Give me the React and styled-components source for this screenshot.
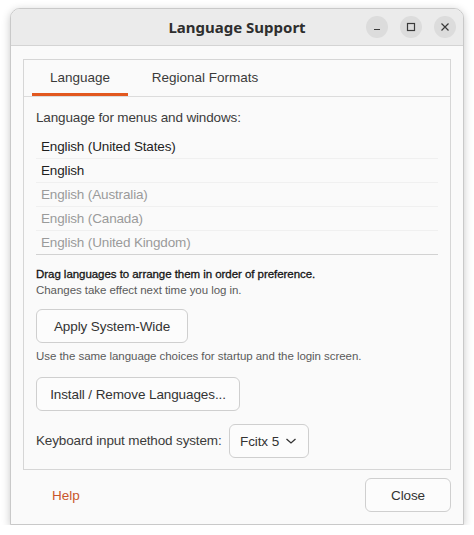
import React from 'react';
import styled, { createGlobalStyle } from 'styled-components';

const GlobalStyle = createGlobalStyle`
    html, body {
        margin: 0;
        padding: 0;
        background: #ffffff;
        font-family: "Liberation Sans", Arial, sans-serif;
        color: #303030;
    }
`;

const Window = styled.div`
    margin: 8px 0 0 10px;
    width: 454px;
    height: 517px;
    box-sizing: border-box;
    border: 1px solid #c9c9c9;
    border-radius: 10px 10px 0 0;
    background: #fafafa;
    box-shadow: 0 2px 8px rgba(0, 0, 0, 0.22);
    display: flex;
    flex-direction: column;
    overflow: hidden;
`;

const TitleBar = styled.div`
    height: 36px;
    flex: none;
    background: #ebebeb;
    border-bottom: 1px solid #d4d4d4;
    display: flex;
    align-items: center;
    justify-content: center;
    position: relative;
`;

const Title = styled.div`
    font-family: "Noto Sans", sans-serif;
    font-size: 15px;
    font-weight: 700;
    color: #2e2e2e;
`;

const Controls = styled.div`
    position: absolute;
    right: 7px;
    top: 7px;
    display: flex;
    gap: 12px;
`;

const CircleButton = styled.div`
    width: 22px;
    height: 22px;
    border-radius: 50%;
    background: #dcdcdc;
    display: flex;
    align-items: center;
    justify-content: center;
`;

const Body = styled.div`
    padding: 13px 12px 0 12px;
    display: flex;
    flex-direction: column;
    flex: 1;
`;

const Frame = styled.div`
    height: 411px;
    box-sizing: border-box;
    border: 1px solid #d6d6d6;
    background: #fafafa;
    display: flex;
    flex-direction: column;
`;

const TabBar = styled.div`
    display: flex;
    padding-left: 8px;
    height: 37px;
    box-sizing: border-box;
    border-bottom: 1px solid #dcdcdc;
`;

const Tab = styled.div`
    width: ${props => props.w};
    display: flex;
    align-items: center;
    justify-content: center;
    font-size: 13.5px;
    color: #3a3a3a;
    box-sizing: border-box;
    border-bottom: 3px solid ${props => (props.active ? '#e2581f' : 'transparent')};
    padding-top: 2px;
`;

const Content = styled.div`
    padding: 12px 12px 0 12px;
    display: flex;
    flex-direction: column;
`;

const Label = styled.div`
    font-size: 13.5px;
    letter-spacing: -0.15px;
    line-height: 18px;
    color: #3c3c3c;
    white-space: nowrap;
`;

const List = styled.div`
    border-bottom: 1px solid #d2d2d2;
    margin: 7px 0 11px 0;
`;

const Row = styled.div`
    height: 24px;
    box-sizing: border-box;
    display: flex;
    align-items: center;
    padding-left: 5px;
    font-size: 13.5px;
    letter-spacing: -0.15px;
    color: ${props => (props.dim ? '#9a9a9a' : '#1e1e1e')};
    border-top: 1px solid #f0f0f0;
    &:first-child {
        border-top: none;
    }
`;

const Note = styled.div`
    font-size: 11.5px;
    line-height: 16px;
    white-space: nowrap;
    letter-spacing: -0.05px;
    color: ${props => (props.strong ? '#141414' : '#5a5a5a')};
    -webkit-text-stroke: ${props => (props.strong ? '0.3px #141414' : '0')};
    margin: ${props => props.m || '0'};
`;

const Button = styled.div`
    box-sizing: border-box;
    height: 34px;
    padding: 0;
    border: 1px solid #cfcfcf;
    border-radius: 6px;
    background: #fcfcfc;
    display: inline-flex;
    align-items: center;
    justify-content: center;
    font-size: 13.5px;
    letter-spacing: -0.1px;
    white-space: nowrap;
    color: #333;
    align-self: flex-start;
    flex: none;
    width: ${props => props.w || 'auto'};
    margin: ${props => props.m || '0'};
`;

const KeyboardRow = styled.div`
    display: flex;
    align-items: center;
    gap: 7px;
    margin-top: 13px;
`;

const Footer = styled.div`
    display: flex;
    justify-content: space-between;
    align-items: center;
    padding-top: 8px;
`;

const HelpLink = styled.div`
    font-size: 13.5px;
    color: #c9562a;
    margin-left: 29px;
`;

const Minimize = () => (
    <svg width="10" height="10" viewBox="0 0 10 10">
        <path d="M2 7.5h6" stroke="#3a3a3a" strokeWidth="1.2" fill="none" />
    </svg>
);

const Maximize = () => (
    <svg width="10" height="10" viewBox="0 0 10 10">
        <rect x="1.5" y="1.5" width="7" height="7" stroke="#3a3a3a" strokeWidth="1.2" fill="none" />
    </svg>
);

const CloseIcon = () => (
    <svg width="10" height="10" viewBox="0 0 10 10">
        <path d="M1.5 1.5l7 7M8.5 1.5l-7 7" stroke="#3a3a3a" strokeWidth="1.2" fill="none" />
    </svg>
);

const Chevron = () => (
    <svg width="12" height="8" viewBox="0 0 12 8" style={{ marginLeft: 6 }}>
        <path d="M1.5 2l4.5 4 4.5-4" stroke="#333" strokeWidth="1.3" fill="none" />
    </svg>
);

const languages = [
    { name: 'English (United States)' },
    { name: 'English' },
    { name: 'English (Australia)', dim: true },
    { name: 'English (Canada)', dim: true },
    { name: 'English (United Kingdom)', dim: true },
];

const App = () => {
    return (
        <>
            <GlobalStyle />
            <Window>
                <TitleBar>
                    <Title>Language Support</Title>
                    <Controls>
                        <CircleButton><Minimize /></CircleButton>
                        <CircleButton><Maximize /></CircleButton>
                        <CircleButton><CloseIcon /></CircleButton>
                    </Controls>
                </TitleBar>
                <Body>
                    <Frame>
                        <TabBar>
                            <Tab active w="96px">Language</Tab>
                            <Tab w="154px">Regional Formats</Tab>
                        </TabBar>
                        <Content>
                            <Label>Language for menus and windows:</Label>
                            <List>
                                {languages.map(lang => (
                                    <Row key={lang.name} dim={lang.dim}>{lang.name}</Row>
                                ))}
                            </List>
                            <Note strong>Drag languages to arrange them in order of preference.</Note>
                            <Note>Changes take effect next time you log in.</Note>
                            <Button m="11px 0 0 0" w="152px">Apply System-Wide</Button>
                            <Note m="5px 0 0 0">Use the same language choices for startup and the login screen.</Note>
                            <Button m="13px 0 0 0" w="204px">Install / Remove Languages...</Button>
                            <KeyboardRow>
                                <Label>Keyboard input method system:</Label>
                                <Button w="80px">Fcitx 5<Chevron /></Button>
                            </KeyboardRow>
                        </Content>
                    </Frame>
                    <Footer>
                        <HelpLink>Help</HelpLink>
                        <Button w="86px">Close</Button>
                    </Footer>
                </Body>
            </Window>
        </>
    );
};

export default App;
